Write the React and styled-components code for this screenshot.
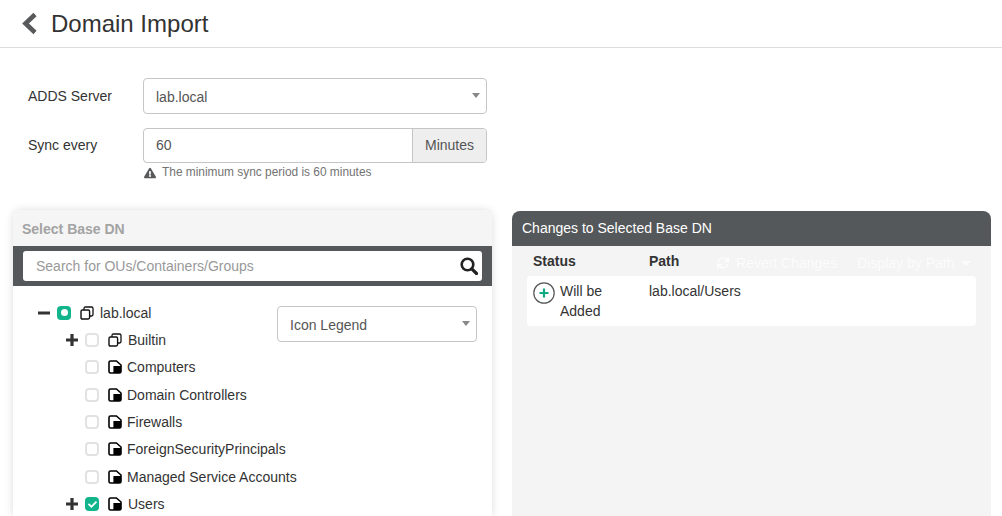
import React from 'react';
import styled, { createGlobalStyle } from 'styled-components';
import { FaCheck, FaExclamationTriangle, FaSync } from 'react-icons/fa';

const GlobalStyle = createGlobalStyle`
  html, body {
    margin: 0;
    height: 516px;
    overflow: hidden;
    background: #fff;
    font-family: 'Liberation Sans', Arial, sans-serif;
    font-size: 14px;
    color: #333;
  }
`;

const Page = styled.div`
  display: flex;
  flex-direction: column;
  height: 516px;
`;

const Header = styled.header`
  display: flex;
  flex: none;
  align-items: center;
  height: 47px;
  padding-left: 21px;
  border-bottom: 1px solid #ddd;
`;

const BackIcon = styled.svg`
  width: 17px;
  height: 23px;
  margin-right: 13px;
`;

const Title = styled.h1`
  margin: 0;
  font-size: 24px;
  font-weight: 400;
  color: #333;
`;

const Form = styled.div`
  display: flex;
  flex: none;
  flex-direction: column;
  width: 487px;
  padding: 30px 0 0 28px;
  box-sizing: border-box;
`;

const FormRow = styled.div`
  display: flex;
  margin-bottom: ${p => p.$gap || 0}px;
`;

const Label = styled.label`
  width: 115px;
  flex: none;
  line-height: ${p => p.$height}px;
`;

const SelectBox = styled.div`
  position: relative;
  flex: ${p => (p.$width ? 'none' : 1)};
  width: ${p => (p.$width ? `${p.$width}px` : 'auto')};
  height: 36px;
  margin-top: ${p => p.$top || 0}px;
  box-sizing: border-box;
  border: 1px solid #c5c5c5;
  border-radius: 4px;
  padding-left: 12px;
  line-height: 37px;
  color: #555;
  background: #fff;
  &::after {
    content: '';
    position: absolute;
    top: 14px;
    right: 6px;
    border-left: 4px solid transparent;
    border-right: 4px solid transparent;
    border-top: 5px solid #888;
  }
`;

const Field = styled.div`
  flex: 1;
  min-width: 0;
`;

const InputGroup = styled.div`
  display: flex;
  height: 35px;
  box-sizing: border-box;
  border: 1px solid #c5c5c5;
  border-radius: 4px;
  line-height: 33px;
  color: #555;
`;

const InputValue = styled.div`
  flex: 1;
  padding-left: 12px;
`;

const Addon = styled.div`
  width: 74px;
  box-sizing: border-box;
  text-align: center;
  background: #eee;
  border-left: 1px solid #c5c5c5;
  border-radius: 0 3px 3px 0;
`;

const Hint = styled.div`
  display: flex;
  align-items: center;
  gap: 6px;
  margin: 2px 0 0 1px;
  font-size: 11.9px;
  line-height: 15px;
  color: #737373;
  svg {
    width: 12px;
    height: 12px;
    color: #58595b;
  }
`;

const Panels = styled.div`
  display: flex;
  flex: 1;
  min-height: 0;
  gap: 20px;
  padding: 30px 11px 0 13px;
  overflow: hidden;
`;

const LeftPanel = styled.section`
  width: 479px;
  flex: none;
  overflow: hidden;
  background: #fff;
  border-radius: 8px 8px 0 0;
  box-shadow: 0 0 8px rgba(0, 0, 0, 0.14);
`;

const LeftTitle = styled.div`
  height: 36px;
  padding-left: 9px;
  line-height: 38px;
  font-weight: 700;
  color: #a3a3a3;
  background: #f5f5f5;
  border-radius: 8px 8px 0 0;
`;

const SearchBar = styled.div`
  height: 40px;
  box-sizing: border-box;
  padding: 5px 10px;
  background: #55585a;
`;

const SearchBox = styled.div`
  display: flex;
  align-items: center;
  justify-content: space-between;
  height: 30px;
  box-sizing: border-box;
  padding: 0 4px 0 13px;
  background: #fff;
  border-radius: 3px;
  color: #999;
`;

const SearchIcon = styled.svg`
  width: 18px;
  height: 18px;
  flex: none;
`;

const PanelBody = styled.div`
  display: flex;
  padding: 13px 15px 0 25px;
`;

const Tree = styled.ul`
  flex: 1;
  min-width: 0;
  list-style: none;
  margin: 0;
  padding: 0;
  white-space: nowrap;
`;

const TreeRow = styled.li`
  display: flex;
  align-items: center;
  height: 27.35px;
  padding-left: ${p => p.$level * 28}px;
  color: #333;
`;

const Toggle = styled.span`
  display: flex;
  flex: none;
  justify-content: center;
  width: 12px;
  height: 12px;
  margin-right: 7px;
`;

const ToggleIcon = styled.svg`
  width: 12px;
  height: 12px;
`;

const Check = styled.span`
  display: flex;
  align-items: center;
  justify-content: center;
  width: 14px;
  height: 14px;
  flex: none;
  box-sizing: border-box;
  margin-right: 9px;
  border-radius: 4px;
  border: ${p => (p.$state === 'off' ? '2px solid #e2e2e2' : 'none')};
  background: ${p => (p.$state === 'off' ? '#fff' : '#12b48c')};
  color: #fff;
  svg {
    width: 9px;
    height: 9px;
  }
`;

const PartialDot = styled.span`
  width: 7px;
  height: 7px;
  border-radius: 50%;
  background: #fff;
`;

const NodeIcon = styled.svg`
  width: 14px;
  height: 14px;
  flex: none;
  margin-right: ${p => p.$gap}px;
`;

const RightPanel = styled.section`
  flex: 1;
  margin-top: 1px;
  background: #f4f4f4;
  border-radius: 8px 8px 0 0;
`;

const RightTitle = styled.div`
  height: 35px;
  padding-left: 10px;
  line-height: 34px;
  color: #fff;
  background: #55585a;
  border-radius: 8px 8px 0 0;
`;

const TableHead = styled.div`
  position: relative;
  display: flex;
  height: 30px;
  padding-left: 21px;
  line-height: 30px;
  font-weight: 700;
  color: #333;
`;

const ColStatus = styled.div`
  width: 116px;
  flex: none;
`;

const Ghosts = styled.div`
  position: absolute;
  top: 2px;
  left: 205px;
  display: flex;
  align-items: center;
  color: #fff;
  font-weight: 400;
  opacity: 0.75;
`;

const GhostAction = styled.span`
  display: flex;
  align-items: center;
  gap: 7px;
  margin-right: ${p => p.$gap || 0}px;
  svg {
    width: 12px;
    height: 12px;
  }
`;

const Caret = styled.span`
  margin-left: 7px;
  border-left: 5px solid transparent;
  border-right: 5px solid transparent;
  border-top: 5px solid #fff;
`;

const TableRow = styled.div`
  display: flex;
  height: 50px;
  margin: 0 15px;
  padding: 5px 6px 0;
  box-sizing: border-box;
  background: #fff;
  border-radius: 4px;
  line-height: 20px;
`;

const StatusCell = styled.div`
  display: flex;
  width: 116px;
  flex: none;
`;

const StatusIcon = styled.svg`
  width: 22px;
  height: 22px;
  flex: none;
  margin: 1px 5px 0 0;
`;

const StatusText = styled.div`
  width: 60px;
`;

const StackIcon = () => (
  <NodeIcon viewBox="0 0 14 14" $gap={6}>
    <path d="M4 4 V2.4 Q4 1 5.4 1 H11.6 Q13 1 13 2.4 V8.6 Q13 10 11.6 10 H9.6" fill="none" stroke="#111" strokeWidth="1.3" />
    <path d="M1 5.4 Q1 4 2.4 4 H8.2 Q9.6 4 9.6 5.4 V11.6 Q9.6 13 8.2 13 H2.4 Q1 13 1 11.6 Z" fill="#fff" stroke="#111" strokeWidth="1.4" />
  </NodeIcon>
);

const ContainerIcon = ({ gap }) => (
  <NodeIcon viewBox="0 0 14 14" $gap={gap}>
    <path d="M1 2.6 Q1 1 2.6 1 H8.4 L13 5 V11.4 Q13 13 11.4 13 H2.6 Q1 13 1 11.4 Z" fill="#fff" stroke="#000" strokeWidth="1.6" />
    <path d="M5.4 6 H13 V11.4 Q13 13 11.4 13 H5.4 Z" fill="#000" />
  </NodeIcon>
);

const PlusIcon = () => (
  <ToggleIcon viewBox="0 0 12 12">
    <path d="M6 0 V12 M0 6 H12" stroke="#333" strokeWidth="3.2" />
  </ToggleIcon>
);

const MinusIcon = () => (
  <ToggleIcon viewBox="0 0 12 12">
    <path d="M0 6 H12" stroke="#333" strokeWidth="3" />
  </ToggleIcon>
);

const leaves = [
  'Computers',
  'Domain Controllers',
  'Firewalls',
  'ForeignSecurityPrincipals',
  'Managed Service Accounts',
];

function App() {
  return (
    <Page>
      <GlobalStyle />
      <Header>
        <BackIcon viewBox="0 0 17 23">
          <path d="M14 2.5 L4.5 11.5 L14 20.5" fill="none" stroke="#58595b" strokeWidth="4.6" />
        </BackIcon>
        <Title>Domain Import</Title>
      </Header>

      <Form>
        <FormRow $gap={14}>
          <Label $height={36}>ADDS Server</Label>
          <SelectBox>lab.local</SelectBox>
        </FormRow>
        <FormRow>
          <Label $height={35}>Sync every</Label>
          <Field>
            <InputGroup>
              <InputValue>60</InputValue>
              <Addon>Minutes</Addon>
            </InputGroup>
            <Hint>
              <FaExclamationTriangle />
              The minimum sync period is 60 minutes
            </Hint>
          </Field>
        </FormRow>
      </Form>

      <Panels>
        <LeftPanel>
          <LeftTitle>Select Base DN</LeftTitle>
          <SearchBar>
            <SearchBox>
              Search for OUs/Containers/Groups
              <SearchIcon viewBox="0 0 18 18">
                <circle cx="7.5" cy="7.5" r="5.8" fill="none" stroke="#222" strokeWidth="2.6" />
                <path d="M11.8 11.8 L16.5 16.5" stroke="#222" strokeWidth="3.2" strokeLinecap="round" />
              </SearchIcon>
            </SearchBox>
          </SearchBar>
          <PanelBody>
            <Tree>
              <TreeRow $level={0}>
                <Toggle><MinusIcon /></Toggle>
                <Check $state="partial"><PartialDot /></Check>
                <StackIcon />
                lab.local
              </TreeRow>
              <TreeRow $level={1}>
                <Toggle><PlusIcon /></Toggle>
                <Check $state="off" />
                <StackIcon />
                Builtin
              </TreeRow>
              {leaves.map(name => (
                <TreeRow key={name} $level={1}>
                  <Toggle />
                  <Check $state="off" />
                  <ContainerIcon gap={5} />
                  {name}
                </TreeRow>
              ))}
              <TreeRow $level={1}>
                <Toggle><PlusIcon /></Toggle>
                <Check $state="on"><FaCheck /></Check>
                <ContainerIcon gap={6} />
                Users
              </TreeRow>
            </Tree>
            <SelectBox $width={200} $top={7}>Icon Legend</SelectBox>
          </PanelBody>
        </LeftPanel>

        <RightPanel>
          <RightTitle>Changes to Selected Base DN</RightTitle>
          <TableHead>
            <ColStatus>Status</ColStatus>
            <div>Path</div>
            <Ghosts>
              <GhostAction $gap={20}><FaSync />Revert Changes</GhostAction>
              <GhostAction>Display by Path</GhostAction>
              <Caret />
            </Ghosts>
          </TableHead>
          <TableRow>
            <StatusCell>
              <StatusIcon viewBox="0 0 22 22">
                <circle cx="11" cy="11" r="10.2" fill="none" stroke="#555" strokeWidth="1.2" />
                <path d="M11 6.5 V15.5 M6.5 11 H15.5" stroke="#12a985" strokeWidth="2.2" />
              </StatusIcon>
              <StatusText>Will be Added</StatusText>
            </StatusCell>
            <div>lab.local/Users</div>
          </TableRow>
        </RightPanel>
      </Panels>
    </Page>
  );
}

export default App;
